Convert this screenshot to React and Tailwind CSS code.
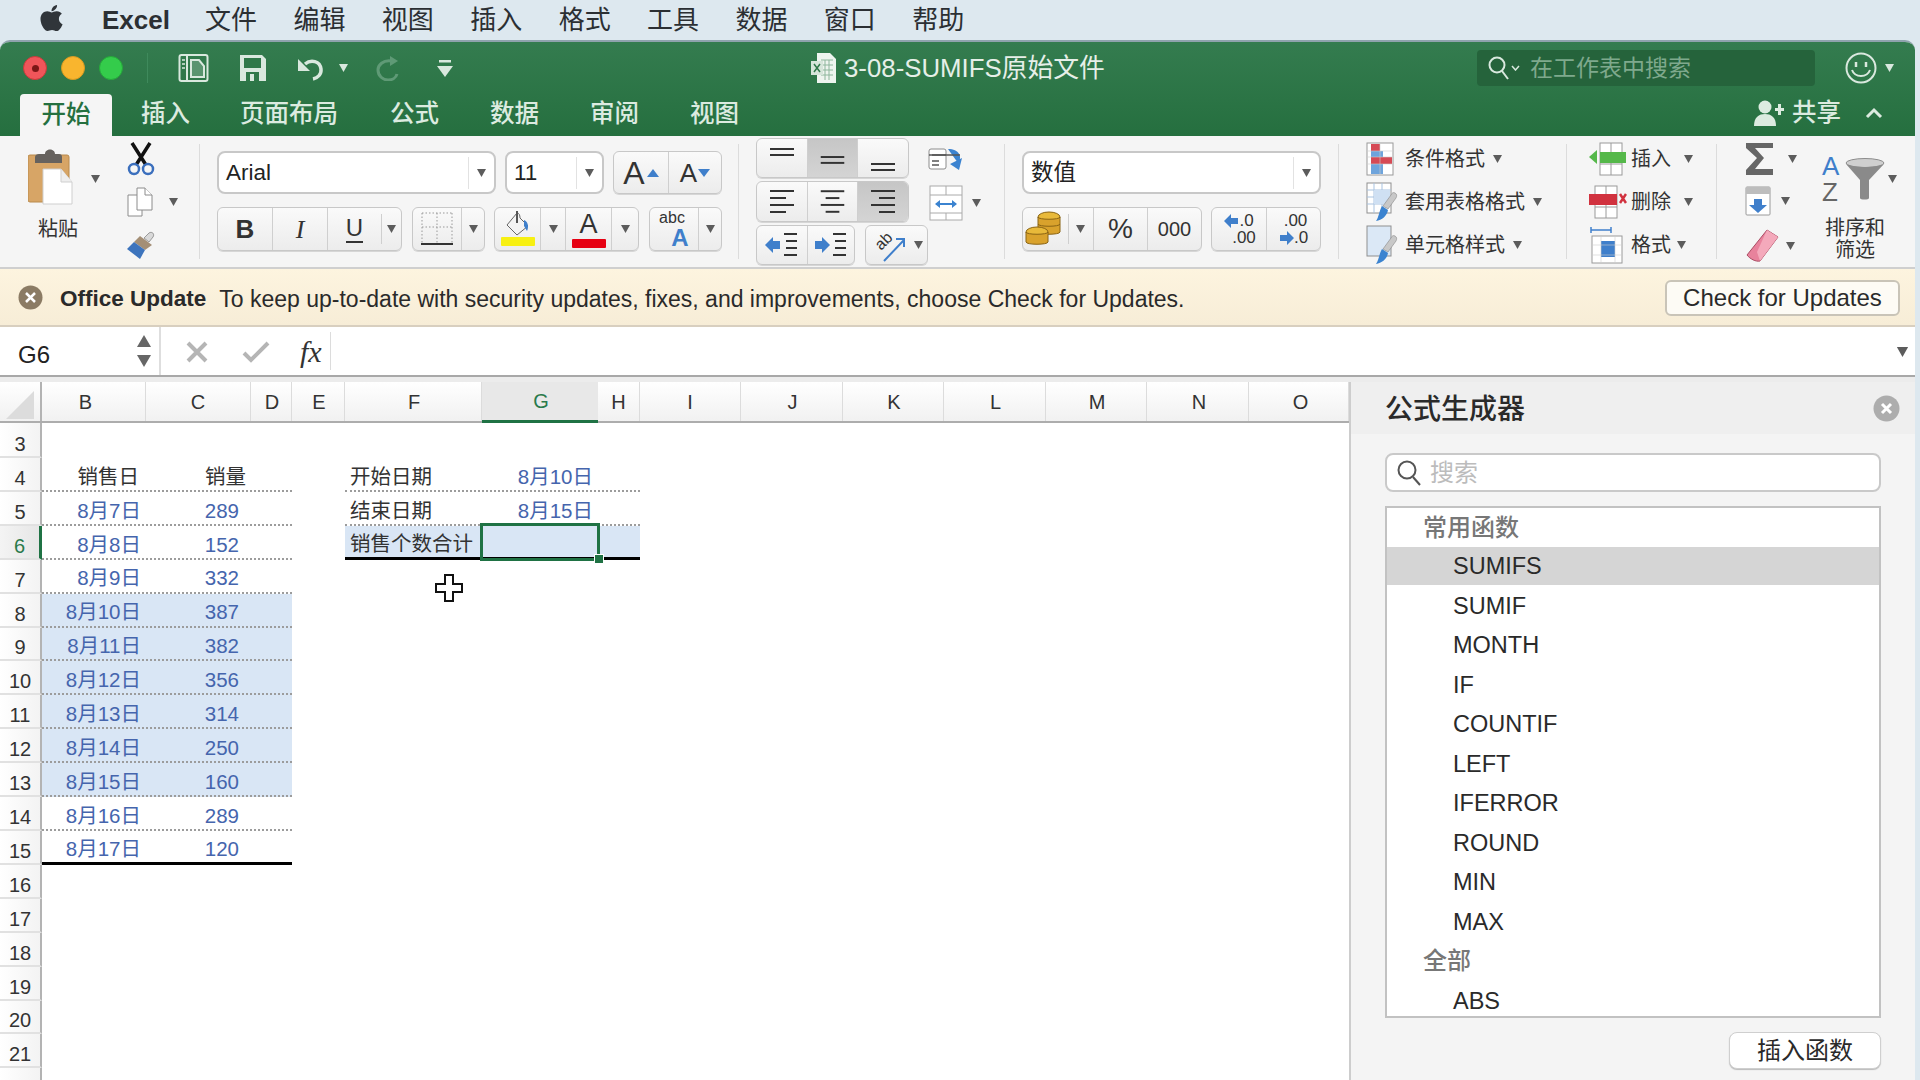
import React from 'react'
import { FaApple } from 'react-icons/fa'

const menus = ['文件', '编辑', '视图', '插入', '格式', '工具', '数据', '窗口', '帮助']
const tabs = [
  ['插入', 'ml-[29px]'],
  ['页面布局', 'ml-[50px]'],
  ['公式', 'ml-[52px]'],
  ['数据', 'ml-[51px]'],
  ['审阅', 'ml-[51px]'],
  ['视图', 'ml-[51px]'],
]
const columns = [
  ['B', 'w-[104px] pr-[16px]'],
  ['C', 'w-[105px]'],
  ['D', 'w-[41px] pl-[2px]'],
  ['E', 'w-[53px] pl-[2px]'],
  ['F', 'w-[137px] pl-[2px]'],
  ['G', 'w-[116px] pl-[2px]'],
  ['H', 'w-[42px]'],
  ['I', 'w-[101px]'],
  ['J', 'w-[102px] pl-[2px]'],
  ['K', 'w-[101px] pl-[2px]'],
  ['L', 'w-[102px] pl-[2px]'],
  ['M', 'w-[101px] pl-[2px]'],
  ['N', 'w-[102px] pl-[3px]'],
  ['O', 'w-[100px] pl-[4px]'],
]
const sales = [
  [5, '8月7日', '289'],
  [6, '8月8日', '152'],
  [7, '8月9日', '332'],
  [8, '8月10日', '387'],
  [9, '8月11日', '382'],
  [10, '8月12日', '356'],
  [11, '8月13日', '314'],
  [12, '8月14日', '250'],
  [13, '8月15日', '160'],
  [14, '8月16日', '289'],
  [15, '8月17日', '120'],
]
const funcs = ['SUMIF', 'MONTH', 'IF', 'COUNTIF', 'LEFT', 'IFERROR', 'ROUND', 'MIN', 'MAX']

const DOTTED = 'border-b-2 border-dotted border-[#9c9c9c]'
const THICK = 'border-b-[3px] border-solid border-black'

function Tri({ className = '', color = '#5c5c5c' }) {
  return (
    <svg width="9" height="8" viewBox="0 0 9 8" className={className}>
      <path d="M0 0h9L4.5 8z" fill={color} />
    </svg>
  )
}

function Seg({ className = '', children }) {
  return (
    <div className={`flex overflow-hidden rounded-md border border-[#c8c8c8] bg-gradient-to-b from-[#fafafa] to-[#ececec] shadow-[0_1px_0_#d6d6d6] ${className}`}>
      {children}
    </div>
  )
}

function Cell({ className = '', active, last, children }) {
  return (
    <div className={`flex items-center justify-center ${last ? '' : 'border-r border-[#cfcfcf]'} ${active ? 'bg-gradient-to-b from-[#c6c6c6] to-[#d4d4d4]' : ''} ${className}`}>
      {children}
    </div>
  )
}

function Select({ className = '', text }) {
  return (
    <div className={`flex h-[43px] items-center rounded-lg border-2 border-[#c8c8c8] bg-white pl-[7px] text-[22.500px] text-[#222] ${className}`}>
      <span className="flex-1">{text}</span>
      <span className="flex h-[32px] w-[26px] items-center justify-center border-l border-[#e2e2e2]">
        <Tri />
      </span>
    </div>
  )
}

function Sep() {
  return <div className="h-[115px] w-px shrink-0 self-center bg-[#dcdcdc]" />
}

function Lines({ rows }) {
  // rows: [y, x1, x2]
  return (
    <svg width="50" height="38" viewBox="0 0 50 38">
      {rows.map(([y, a, b]) => (
        <rect key={y} x={a} y={y} width={b - a} height="2" fill="#333" />
      ))}
    </svg>
  )
}

function CondIcon() {
  return (
    <svg width="30" height="40" viewBox="0 0 30 40">
      <rect x="1" y="4" width="26" height="32" fill="#fff" stroke="#9a9a9a" />
      <rect x="5" y="5" width="9" height="7" fill="#d64a55" />
      <rect x="5" y="12" width="12" height="6" fill="#6ea4dc" />
      <rect x="5" y="18" width="21" height="7" fill="#d64a55" />
      <rect x="5" y="25" width="12" height="10" fill="#6ea4dc" />
      <path d="M1 12h26M1 18h26M1 25h26M14 4v32" stroke="#cfcfcf" strokeWidth=".6" />
    </svg>
  )
}

function TableBrushIcon({ grid }) {
  return (
    <svg width="32" height="42" viewBox="0 0 32 42">
      <rect x="1" y="2" width="24" height="30" fill={grid ? '#fff' : '#dbe8f6'} stroke="#8f8f8f" />
      {grid && <path d="M1 9h24M1 16h24M1 23h24M8 2v30M16 2v30" stroke="#a9c3e0" />}
      {grid && <rect x="8" y="9" width="16" height="14" fill="#cfe0f3" />}
      <path d="M29 12c2 1 2 3 1 5l-8 11-5-3 8-11c1-2 2-3 4-2z" fill="#c8c8c8" stroke="#888" strokeWidth=".6" />
      <path d="M16 25l6 4c-1 6-6 10-12 11 3-4 3-10 6-15z" fill="#3b83d0" />
    </svg>
  )
}

function Painter() {
  return (
    <svg width="32" height="30" viewBox="0 0 32 30">
      <path d="M24 3c3-2 6 1 4 4l-4 5-5-4z" fill="#d9d9d9" stroke="#999" />
      <path d="M15 6l12 9-7 5L9 12z" fill="#a48f76" />
      <path d="M9 12l11 8-5 9L2 19z" fill="#3d74bd" />
    </svg>
  )
}

function SheetRow({ n, rowClass = 'h-[33.92px]', selected, cells = {} }) {
  return (
    <div className={`flex shrink-0 ${rowClass}`}>
      <div className={`flex w-[42px] shrink-0 items-center justify-center border-b-2 border-[#e1e1e1] pt-2 text-[20px] ${selected ? 'border-r-[3px] border-r-[#1f7244] bg-gradient-to-r from-[#f4f4f4] to-[#e6e6e6] text-[#2a7a4b]' : 'border-r-2 border-r-[#b3b3b3] bg-gradient-to-r from-white to-[#f3f3f3] text-[#333]'}`}>
        {n}
      </div>
      {cells.left}
      {cells.right}
    </div>
  )
}

function SalesCells({ date, qty, fill, last, head }) {
  const bg = fill ? 'bg-[#d9e6f5]' : ''
  const line = last ? THICK : DOTTED
  return (
    <div className={`flex w-[250px] shrink-0 ${line} ${bg}`}>
      <div className={`flex w-[104px] items-center justify-end pt-[6px] ${head ? 'pr-[7px] text-[#333]' : 'pr-[5px] text-[#4565ad]'}`}>{date}</div>
      <div className={`flex w-[105px] items-center justify-end pt-[6px] ${head ? 'pr-[5px] text-[#333]' : 'pr-[12px] text-[#4565ad]'}`}>{qty}</div>
    </div>
  )
}

export default function App() {
  const rightCells = {
    4: (
      <div className={`ml-[53px] flex w-[295px] shrink-0 ${DOTTED}`}>
        <div className="flex w-[137px] items-center pl-[5px] pt-[6px] text-[#333]">开始日期</div>
        <div className="flex w-[116px] items-center justify-end pr-[5px] pt-[6px] text-[#4565ad]">8月10日</div>
      </div>
    ),
    5: (
      <div className={`ml-[53px] flex w-[295px] shrink-0 ${DOTTED}`}>
        <div className="flex w-[137px] items-center pl-[5px] pt-[6px] text-[#333]">结束日期</div>
        <div className="flex w-[116px] items-center justify-end pr-[5px] pt-[6px] text-[#4565ad]">8月15日</div>
      </div>
    ),
    6: (
      <div className={`ml-[53px] flex w-[295px] shrink-0 bg-[#d9e6f5] ${THICK}`}>
        <div className="flex w-[137px] items-center whitespace-nowrap pl-[5px] pt-[6px] text-[#333]">销售个数合计</div>
        <div className="relative w-[116px]">
          <div className="absolute -bottom-[4px] -left-[2px] -right-[2px] -top-[3px] border-[3px] border-[#1f7244]" />
          <div className="absolute -bottom-[7px] -right-[6px] h-[10px] w-[10px] border border-white bg-[#1f7244]" />
        </div>
      </div>
    ),
  }

  return (
    <div className="relative h-[1080px] w-[1920px] overflow-hidden bg-[#dde8ef] text-[#222] [font-family:'Liberation_Sans','Noto_Sans_CJK_SC',sans-serif]">
      {/* mac menu bar */}
      <div className="flex h-[40px] items-center pl-[39px] text-[26px] leading-none text-[#2b2f33]">
        <FaApple className="h-[30px] w-[25px] -translate-y-[2px] text-[#30353a]" />
        <span className="ml-[38px] w-[67px] text-[26px] font-bold">Excel</span>
        <div className="ml-[36px] flex gap-[36.400px]">
          {menus.map((m) => (
            <span key={m}>{m}</span>
          ))}
        </div>
      </div>

      {/* window */}
      <div className="flex h-[1040px] w-[1915px] flex-col overflow-hidden rounded-t-[10px] border-t-2 border-[#8fa3ad] bg-white">
        <div className="bg-gradient-to-b from-[#347c4f] to-[#256f3f]">
          <div className="flex h-[52px] items-center pl-[23px]">
            <div className="flex gap-[14px]">
              <span className="flex h-[24px] w-[24px] items-center justify-center rounded-full border border-[#c93a3a] bg-[#f0555a]">
                <span className="h-[7px] w-[7px] rounded-full bg-[#7c1717]" />
              </span>
              <span className="h-[24px] w-[24px] rounded-full border border-[#d99a20] bg-[#f9b52e]" />
              <span className="h-[24px] w-[24px] rounded-full border border-[#25a83a] bg-[#34cc4b]" />
            </div>
            <div className="ml-[24px] h-[30px] w-px bg-[#3f8a5c]" />
            <svg className="ml-[30px]" width="31" height="30" viewBox="0 0 31 30" fill="none" stroke="#d9e8de" strokeWidth="2">
              <rect x="1.5" y="2" width="28" height="26" rx="2" />
              <path d="M9 2v26" />
              <path d="M4 7h3M4 11h3M4 15h3" strokeWidth="1.5" />
              <path d="M13 7h8l5 6v11H13z" fill="#d9e8de" fillOpacity=".25" />
            </svg>
            <svg className="ml-[29px]" width="29" height="28" viewBox="0 0 29 28">
              <path d="M2 1h22l4 4v22H2z" fill="#d9e8de" />
              <rect x="6" y="4" width="17" height="10" fill="#2f7849" />
              <rect x="8" y="18" width="13" height="9" fill="#2f7849" />
              <rect x="12" y="20" width="4" height="7" fill="#d9e8de" />
            </svg>
            <svg className="ml-[29px]" width="30" height="26" viewBox="0 0 30 26" fill="none">
              <path d="M2 4v12h12z" fill="#d9e8de" />
              <path d="M9 9c6-5 15-3 16 5 .6 5-3 9-8 10" stroke="#d9e8de" strokeWidth="3.5" />
            </svg>
            <Tri className="ml-[13px]" color="#d9e8de" />
            <svg className="ml-[28px]" width="24" height="26" viewBox="0 0 24 26" fill="none">
              <path d="M14 1v10l8-5z" fill="#5f9a76" />
              <path d="M15 6C7 5 2 10 2 15c0 6 5 10 10 10 4 0 8-2 9-6" stroke="#5f9a76" strokeWidth="3" />
            </svg>
            <svg className="ml-[37px]" width="16" height="22" viewBox="0 0 16 22">
              <path d="M2 3h12v2.500H2z" fill="#d9e8de" />
              <path d="M0 9h16l-8 11z" fill="#d9e8de" />
            </svg>
            <svg className="ml-[358px]" width="26" height="32" viewBox="0 0 26 32">
              <path d="M6 1h13l6 6v24H6z" fill="#eef4ef" />
              <path d="M10 8h12M10 13h12M10 18h12M10 23h12M14 8v20M18 8v20" stroke="#8eb69c" strokeWidth="1" />
              <rect x="0" y="9" width="12" height="14" fill="#d6e5da" />
              <path d="M3 12l6 8M9 12l-6 8" stroke="#2f7849" strokeWidth="1.500" />
            </svg>
            <span className="ml-[7px] w-[272px] whitespace-nowrap text-[25.800px] text-[#e6efe8]">3-08-SUMIFS原始文件</span>
            <div className="ml-[361px] flex h-[36px] w-[338px] items-center rounded bg-[#25633b] pl-[11px]">
              <svg width="22" height="24" viewBox="0 0 22 24" fill="none" stroke="#d9e8de" strokeWidth="2">
                <circle cx="9" cy="9" r="7.500" />
                <path d="M14 15l6 8" />
              </svg>
              <svg className="ml-[1px]" width="9" height="6" viewBox="0 0 9 6" fill="none" stroke="#d9e8de" strokeWidth="1.500">
                <path d="M1 1l3.500 4L8 1" />
              </svg>
              <span className="ml-[10px] text-[23px] text-[#7fa98d]">在工作表中搜索</span>
            </div>
            <svg className="ml-[30px]" width="32" height="32" viewBox="0 0 32 32" fill="none" stroke="#d9e8de" strokeWidth="2">
              <circle cx="16" cy="16" r="14.500" />
              <path d="M11 10v5M21 10v5" strokeWidth="2.500" />
              <path d="M7 18c3 8 15 8 18 0" />
            </svg>
            <Tri className="ml-[8px]" color="#d9e8de" />
          </div>
          <div className="flex h-[42px] pl-[20px] pr-[32px] text-[24.5px] font-medium text-[#dcebe0]">
            <div className="flex w-[92px] items-center justify-center rounded-t bg-[#f5f5f5] text-[#257040]">开始</div>
            {tabs.map(([t, ml]) => (
              <span key={t} className={`flex items-center pb-[1px] ${ml}`}>{t}</span>
            ))}
            <div className="ml-auto flex items-center pb-[4px]">
              <svg width="32" height="28" viewBox="0 0 32 28" fill="#dcebe0">
                <circle cx="12" cy="8" r="6.500" />
                <path d="M1 27c0-9 5-12 11-12s11 3 11 12z" />
                <path d="M22 9h9v3h-9zM25 5h3v11h-3z" />
              </svg>
              <span className="ml-[7px]">共享</span>
              <svg className="ml-[24px]" width="18" height="12" viewBox="0 0 18 12" fill="none" stroke="#dcebe0" strokeWidth="3">
                <path d="M2 10l7-7 7 7" />
              </svg>
            </div>
          </div>
        </div>

        {/* ribbon */}
        <div className="flex h-[133px] shrink-0 border-b-2 border-[#cfcfcf] bg-[#f5f5f5]">
          <div className="flex w-[114px] shrink-0 flex-col pl-[28px] pt-[13px]">
            <div className="flex items-center">
              <svg width="45" height="56" viewBox="0 0 45 56">
                <rect x="0" y="6" width="41" height="47" rx="2" fill="#d7a566" stroke="#b98a4c" />
                <path d="M7 14V8c0-2 2-3 4-3h6c0-6 10-6 10 0h4c2 0 3 1 3 3v6z" fill="#66625e" />
                <path d="M15 20h18l11 13v22H15z" fill="#fff" stroke="#cfcfcf" />
                <path d="M33 20v13h11" fill="#eee" stroke="#cfcfcf" />
              </svg>
              <Tri className="ml-[18px] mt-[4px]" />
            </div>
            <span className="ml-[10px] mt-[9px] text-[20px] text-[#333]">粘贴</span>
          </div>
          <div className="flex w-[85px] shrink-0 flex-col pl-[11px] pt-[6px]">
            <svg width="32" height="34" viewBox="0 0 32 34" fill="none">
              <path d="M7 1l14 22M25 1L11 23" stroke="#111" strokeWidth="3.500" />
              <circle cx="9" cy="27" r="5" stroke="#3b6fbd" strokeWidth="2.500" />
              <circle cx="23" cy="27" r="5" stroke="#3b6fbd" strokeWidth="2.500" />
            </svg>
            <div className="ml-[2px] mt-[11px] flex items-center">
              <svg width="26" height="30" viewBox="0 0 26 30" fill="#fff" stroke="#8c8c8c">
                <path d="M1 8h14v21H1z" />
                <path d="M10 1h8l7 7v15H10z" />
                <path d="M18 1v7h7" />
              </svg>
              <Tri className="ml-[16px]" />
            </div>
            <div className="mt-[13px]">
              <Painter />
            </div>
          </div>
          <Sep />

          <div className="ml-[17px] flex w-[505px] shrink-0 flex-col pt-[15px]">
            <div className="flex">
              <Select className="w-[279px]" text="Arial" />
              <Select className="ml-[9px] w-[99px]" text="11" />
              <Seg className="ml-[9px] h-[43px] w-[109px]">
                <Cell className="w-[55px] gap-[2px]">
                  <span className="text-[32px] leading-none text-[#333]">A</span>
                  <svg width="12" height="8" viewBox="0 0 12 8"><path d="M0 8h12L6 0z" fill="#3f7fcb" /></svg>
                </Cell>
                <Cell last className="flex-1 gap-[1px]">
                  <span className="text-[26px] leading-none text-[#333]">A</span>
                  <svg width="12" height="8" viewBox="0 0 12 8"><path d="M0 0h12L6 8z" fill="#3f7fcb" /></svg>
                </Cell>
              </Seg>
            </div>
            <div className="mt-[13px] flex h-[44px]">
              <Seg className="w-[185px]">
                <Cell className="w-[55px] text-[26px] font-bold text-[#333]">B</Cell>
                <Cell className="w-[55px] text-[26px] italic text-[#333] [font-family:'Liberation_Serif',serif]">I</Cell>
                <Cell className="w-[53px] border-r-0">
                  <span className="border-b-2 border-[#333] text-[24px] leading-[26px] text-[#333]">U</span>
                </Cell>
                <Cell last className="flex-1">
                  <span className="flex h-[30px] w-full items-center justify-center border-l border-[#cfcfcf]"><Tri /></span>
                </Cell>
              </Seg>
              <Seg className="ml-[10px] w-[73px]">
                <Cell last className="w-[48px]">
                  <svg width="34" height="36" viewBox="0 0 34 36" fill="none">
                    <path d="M2 2h30M2 16h30M2 2v30M17 2v30M32 2v30" stroke="#999" strokeDasharray="1.500 2" />
                    <path d="M1 33h32" stroke="#333" strokeWidth="2" />
                  </svg>
                </Cell>
                <Cell last className="flex-1 border-l border-[#cfcfcf]"><Tri /></Cell>
              </Seg>
              <Seg className="ml-[9px] w-[145px]">
                <Cell last className="w-[45px]">
                  <svg width="34" height="38" viewBox="0 0 34 38">
                    <path d="M16 3c2 0 3 2 3 5l8 8-11 9-10-10z" fill="#f4f4f4" stroke="#666" />
                    <path d="M16 1v12" stroke="#555" strokeWidth="2" />
                    <path d="M23 10c4 2 5 6 3 11l-3-5z" fill="#3f7fcb" />
                    <rect x="0" y="27" width="34" height="9" rx="1" fill="#f7f012" />
                  </svg>
                </Cell>
                <Cell className="w-[26px] border-l border-[#cfcfcf]"><Tri /></Cell>
                <Cell last className="w-[45px] flex-col leading-none">
                  <span className="text-[27px] text-[#333]">A</span>
                  <span className="mt-[1px] h-[9px] w-[34px] rounded-[1px] bg-[#e60012]" />
                </Cell>
                <Cell last className="flex-1 border-l border-[#cfcfcf]"><Tri /></Cell>
              </Seg>
              <Seg className="ml-[10px] w-[73px]">
                <Cell last className="w-[48px] flex-col leading-none">
                  <span className="-ml-[4px] text-[16px] leading-[16px] text-[#333]">abc</span>
                  <span className="ml-[12px] text-[24px] leading-[23px] font-bold text-[#3f7fcb]">A</span>
                </Cell>
                <Cell last className="flex-1 border-l border-[#cfcfcf]"><Tri /></Cell>
              </Seg>
            </div>
          </div>
          <div className="ml-[16px]" />
          <Sep />

          <div className="ml-[17px] flex w-[248px] shrink-0">
            <div className="flex w-[172px] flex-col pt-[2px]">
              <Seg className="h-[40px] w-[153px]">
                <Cell className="w-[52px]"><Lines rows={[[9, 13, 37], [15, 13, 37]]} /></Cell>
                <Cell active className="w-[50px]"><Lines rows={[[17, 13, 37], [23, 13, 37]]} /></Cell>
                <Cell last className="flex-1"><Lines rows={[[24, 13, 37], [30, 13, 37]]} /></Cell>
              </Seg>
              <Seg className="mt-[3px] h-[41px] w-[153px]">
                <Cell className="w-[52px]"><Lines rows={[[7, 13, 37], [14, 13, 29], [21, 13, 37], [28, 13, 29]]} /></Cell>
                <Cell className="w-[50px]"><Lines rows={[[7, 13, 37], [14, 18, 32], [21, 13, 37], [28, 18, 32]]} /></Cell>
                <Cell last active className="flex-1"><Lines rows={[[7, 13, 37], [14, 21, 37], [21, 13, 37], [28, 21, 37]]} /></Cell>
              </Seg>
              <div className="mt-[3px] flex h-[40px]">
                <Seg className="w-[101px]">
                  <Cell className="w-[51px]">
                    <svg width="34" height="26" viewBox="0 0 34 26">
                      <path d="M0 13l8-8v4h7v8H8v4z" fill="#3f7fcb" />
                      <path d="M19 2h13M21 9h11M21 16h11M19 23h13" stroke="#333" strokeWidth="2" />
                    </svg>
                  </Cell>
                  <Cell last className="flex-1">
                    <svg width="34" height="26" viewBox="0 0 34 26">
                      <path d="M16 13L8 5v4H1v8h7v4z" fill="#3f7fcb" />
                      <path d="M19 2h13M21 9h11M21 16h11M19 23h13" stroke="#333" strokeWidth="2" />
                    </svg>
                  </Cell>
                </Seg>
                <Seg className="ml-[10px] w-[64px]">
                  <Cell last className="w-[44px]">
                    <svg width="38" height="36" viewBox="0 0 38 36" fill="none">
                      <text x="12" y="24" fontSize="16" fill="#333" transform="rotate(-45 12 24)">ab</text>
                      <path d="M15 34l20-21M27 12h8v8" stroke="#3f7fcb" strokeWidth="2" />
                    </svg>
                  </Cell>
                  <Cell last className="flex-1"><Tri /></Cell>
                </Seg>
              </div>
            </div>
            <div className="flex flex-1 flex-col pt-[10px]">
              <svg width="36" height="30" viewBox="0 0 36 30">
                <rect x="1" y="3" width="17" height="20" rx="2" fill="#fff" stroke="#8c8c8c" />
                <path d="M1 9h17M4 15h7M4 19h7" stroke="#555" strokeWidth="1.500" />
                <path d="M20 3c11 0 15 8 10 14M34 12l-3 12-9-6z" fill="#3b83d0" />
                <path d="M4 9h28" stroke="#555" strokeWidth="1.500" />
              </svg>
              <div className="mt-[9px] flex items-center">
                <svg width="36" height="36" viewBox="0 0 36 36">
                  <rect x="2" y="1" width="32" height="34" fill="#fff" stroke="#aaa" />
                  <path d="M2 10h32M2 28h32M18 1v9M18 28v7" stroke="#aaa" />
                  <path d="M7 19l5-4v3h12v-3l5 4-5 4v-3H12v3z" fill="#3b83d0" />
                </svg>
                <Tri className="ml-[8px]" />
              </div>
            </div>
          </div>
          <Sep />

          <div className="ml-[17px] flex w-[299px] shrink-0 flex-col pt-[15px]">
            <Select text="数值" />
            <div className="mt-[13px] flex h-[44px]">
              <Seg className="w-[180px]">
                <Cell className="w-[71px] justify-start gap-[3px] pl-[2px]">
                  <svg width="36" height="38" viewBox="0 0 36 38">
                    <ellipse cx="24" cy="7" rx="11" ry="5" fill="#e8b93a" stroke="#8a6414" />
                    <path d="M13 7v15c0 3 22 3 22 0V7c0 3-22 3-22 0z" fill="#d9a22c" stroke="#8a6414" />
                    <path d="M13 14c0 3 22 3 22 0" fill="none" stroke="#8a6414" />
                    <ellipse cx="12" cy="22" rx="11" ry="5" fill="#e8b93a" stroke="#8a6414" />
                    <path d="M1 22v10c0 3 22 3 22 0V22c0 3-22 3-22 0z" fill="#d9a22c" stroke="#8a6414" />
                  </svg>
                  <span className="ml-[4px] flex h-[30px] items-center border-l border-[#cfcfcf] pl-[7px]"><Tri /></span>
                </Cell>
                <Cell className="w-[54px] text-[28px] text-[#333]">%</Cell>
                <Cell last className="flex-1 text-[20px] text-[#333]">000</Cell>
              </Seg>
              <Seg className="ml-[9px] w-[110px]">
                <Cell className="w-[55px] flex-col text-[17px] leading-[17px] text-[#333]">
                  <span className="flex items-center">
                    <svg width="15" height="14" viewBox="0 0 15 14"><path d="M0 7l7-7v4h7v6H7v4z" fill="#3f7fcb" /></svg>
                    .0
                  </span>
                  <span className="ml-[10px]">.00</span>
                </Cell>
                <Cell last className="flex-1 flex-col text-[17px] leading-[17px] text-[#333]">
                  <span className="ml-[4px]">.00</span>
                  <span className="flex items-center">
                    <svg width="15" height="14" viewBox="0 0 15 14"><path d="M15 7L8 0v4H1v6h7v4z" fill="#3f7fcb" /></svg>
                    .0
                  </span>
                </Cell>
              </Seg>
            </div>
          </div>
          <div className="ml-[17px]" />
          <Sep />

          <div className="flex w-[227px] shrink-0 flex-col pl-[27px] pt-[1px] text-[20px] text-[#333]">
            <div className="flex h-[43.500px] items-center">
              <CondIcon />
              <span className="ml-[9px]">条件格式</span>
              <Tri className="ml-[8px]" />
            </div>
            <div className="flex h-[43.500px] items-center">
              <TableBrushIcon grid />
              <span className="ml-[7px]">套用表格格式</span>
              <Tri className="ml-[8px]" />
            </div>
            <div className="flex h-[43.500px] items-center">
              <TableBrushIcon />
              <span className="ml-[7px]">单元格样式</span>
              <Tri className="ml-[8px]" />
            </div>
          </div>
          <Sep />

          <div className="flex w-[149px] shrink-0 flex-col pl-[22px] pt-[1px] text-[20px] text-[#333]">
            <div className="flex h-[43.500px] items-center">
              <svg width="38" height="34" viewBox="0 0 38 34">
                <rect x="11" y="1" width="22" height="32" fill="#fff" stroke="#9a9a9a" />
                <path d="M11 22h22M22 1v32" stroke="#9a9a9a" />
                <rect x="11" y="10" width="26" height="11" fill="#55b84a" />
                <path d="M0 15l8-7v14z" fill="#55b84a" />
              </svg>
              <span className="ml-[4px]">插入</span>
              <Tri className="ml-[13px]" />
            </div>
            <div className="flex h-[43.500px] items-center">
              <svg width="38" height="34" viewBox="0 0 38 34">
                <rect x="6" y="1" width="22" height="32" fill="#fff" stroke="#9a9a9a" />
                <path d="M6 22h22M17 1v32" stroke="#9a9a9a" />
                <rect x="0" y="9" width="28" height="11" fill="#d1323f" />
                <path d="M31 9l6 9M37 9l-6 9" stroke="#d1323f" strokeWidth="2.500" />
              </svg>
              <span className="ml-[4px]">删除</span>
              <Tri className="ml-[13px]" />
            </div>
            <div className="flex h-[43.500px] items-center">
              <svg width="38" height="38" viewBox="0 0 38 38">
                <path d="M2 4h20M2 1v6M22 1v6" stroke="#3f7fcb" strokeWidth="1.500" />
                <rect x="3" y="10" width="30" height="27" fill="#fff" stroke="#9a9a9a" />
                <rect x="12" y="15" width="14" height="16" fill="#3f7fcb" />
                <path d="M3 19h30M3 29h30M12 10v27M26 10v27" stroke="#cfcfcf" strokeWidth=".6" />
              </svg>
              <span className="ml-[4px]">格式</span>
              <Tri className="ml-[6px]" />
            </div>
          </div>
          <Sep />

          <div className="flex flex-1">
            <div className="flex w-[105px] flex-col pl-[28px] pt-[7px]">
              <div className="flex items-center">
                <svg width="30" height="32" viewBox="0 0 30 32">
                  <path d="M1 0h27v5H10l9 10-9 11h18v6H1v-5l11-12L1 5z" fill="#666" />
                </svg>
                <Tri className="ml-[13px]" />
              </div>
              <div className="mt-[11px] flex items-center">
                <svg width="26" height="30" viewBox="0 0 26 30">
                  <rect x="1" y="1" width="24" height="28" rx="1" fill="#fff" stroke="#9a9a9a" />
                  <rect x="1" y="1" width="24" height="7" fill="#bdbdbd" />
                  <path d="M9 13h8v6h5l-9 8-9-8h5z" fill="#3f7fcb" />
                </svg>
                <Tri className="ml-[10px]" />
              </div>
              <div className="mt-[13px] flex items-center">
                <svg width="34" height="34" viewBox="0 0 34 34">
                  <path d="M22 1l11 7-18 24c-4 1-10-2-13-6z" fill="#e8829c" stroke="#a94c63" />
                  <path d="M22 1l11 7-18 24-3-9z" fill="#f4a9bb" />
                </svg>
                <Tri className="ml-[7px]" />
              </div>
            </div>
            <div className="flex flex-1 flex-col items-start pt-[17px]">
              <div className="flex items-center">
                <div className="flex w-[22px] flex-col text-[26px] leading-[26px]">
                  <span className="text-[#3f7fcb]">A</span>
                  <span className="text-[#666]">Z</span>
                </div>
                <svg className="ml-[1px]" width="40" height="42" viewBox="0 0 40 42">
                  <ellipse cx="20" cy="5" rx="19" ry="4.500" fill="#cfcfcf" stroke="#8c8c8c" />
                  <path d="M1 6l14 16v18c0 2 9 2 9 0V22L39 6c-8 4-30 4-38 0z" fill="#8a8a8a" />
                </svg>
                <Tri className="ml-[3px]" />
              </div>
              <div className="ml-[2px] mt-[12px] flex w-[62px] flex-col items-center text-[20px] leading-[22px] text-[#333]">
                <span>排序和</span>
                <span>筛选</span>
              </div>
            </div>
          </div>
        </div>

        {/* update banner */}
        <div className="flex h-[58px] shrink-0 items-center border-b-2 border-[#d8cfbf] bg-gradient-to-b from-[#fdf4df] to-[#f7edd7] pl-[18px] pr-[15px]">
          <svg width="25" height="25" viewBox="0 0 25 25">
            <circle cx="12.500" cy="12.500" r="12" fill="#8b7b64" />
            <path d="M8 8l9 9M17 8l-9 9" stroke="#fff" strokeWidth="2.500" />
          </svg>
          <span className="ml-[17px] pt-[4px] text-[22.500px] font-bold leading-none text-[#2a2a2a]">Office Update</span>
          <span className="ml-[13px] pt-[4px] text-[23px] leading-none text-[#2a2a2a]">
            To keep up-to-date with security updates, fixes, and improvements, choose Check for Updates.
          </span>
          <button className="ml-auto mt-[1px] flex h-[36px] w-[235px] items-center justify-center rounded-md border-2 border-[#c9c4b8] bg-[#fdfbf5] text-[24px] text-[#2a2a2a]">
            Check for Updates
          </button>
        </div>

        {/* formula bar */}
        <div className="flex h-[50px] shrink-0 items-center border-b-2 border-[#a8a8a8] bg-white">
          <div className="flex h-full w-[161px] items-center border-r-2 border-[#dedede] pl-[18px] pr-[8px] text-[24px] text-[#222]">
            <span className="flex-1 pt-[8px]">G6</span>
            <div className="flex flex-col gap-[8px]">
              <svg width="14" height="12" viewBox="0 0 14 12"><path d="M0 12h14L7 0z" fill="#666" /></svg>
              <svg width="14" height="12" viewBox="0 0 14 12"><path d="M0 0h14L7 12z" fill="#666" /></svg>
            </div>
          </div>
          <svg className="ml-[25px] mt-[2px]" width="22" height="22" viewBox="0 0 22 22" stroke="#b5b5b5" strokeWidth="4">
            <path d="M2 2l18 18M20 2L2 20" />
          </svg>
          <svg className="ml-[34px] mt-[2px]" width="28" height="22" viewBox="0 0 28 22" fill="none" stroke="#b5b5b5" strokeWidth="4">
            <path d="M2 12l7 7L26 2" />
          </svg>
          <span className="ml-[30px] mt-[2px] w-[28px] text-[30px] italic leading-none text-[#333] [font-family:'Liberation_Serif',serif]">fx</span>
          <div className="ml-[2px] h-[38px] w-px bg-[#dcdcdc]" />
          <Tri className="ml-auto mr-[8px] mt-[2px] scale-125" />
        </div>
        <div className="h-[5px] shrink-0 bg-[#ececec]" />

        <div className="flex min-h-0 flex-1">
          {/* sheet */}
          <div className="flex w-[1349px] shrink-0 flex-col overflow-hidden text-[20.500px] leading-none">
            <div className="flex h-[41px] shrink-0 border-b-2 border-[#adadad] bg-gradient-to-b from-white to-[#f1f1f1] text-[20px]">
              <div className="flex w-[42px] shrink-0 items-end justify-center border-r-2 border-[#b3b3b3] pb-[2px]">
                <svg width="28" height="30" viewBox="0 0 28 30"><path d="M0 30L28 2v28z" fill="#dcdcdc" /></svg>
              </div>
              {columns.map(([c, w]) => (
                <div
                  key={c}
                  className={`flex shrink-0 items-center justify-center ${w} ${c === 'G' ? 'border-b-[3px] border-[#1f7244] bg-[#e8e8e8] text-[#2a7a4b] -mb-[2px]' : 'border-r border-[#dcdcdc] text-[#333]'}`}
                >
                  {c}
                </div>
              ))}
            </div>

            <SheetRow n={3} rowClass="h-[35px]" />
            <SheetRow n={4} cells={{ left: <SalesCells head date="销售日" qty="销量" />, right: rightCells[4] }} />
            {sales.map(([n, date, qty]) => (
              <SheetRow
                key={n}
                n={n}
                selected={n === 6}
                cells={{
                  left: <SalesCells date={date} qty={qty} fill={n >= 8 && n <= 13} last={n === 15} />,
                  right: rightCells[n],
                }}
              />
            ))}
            {[16, 17, 18, 19, 20, 21, ''].map((n) => (
              <SheetRow key={n} n={n} />
            ))}
          </div>

          {/* formula builder */}
          <div className="relative flex w-[566px] flex-col border-l-2 border-[#cdcdcd] bg-[#f4f4f4]">
            <div className="flex h-[52px] shrink-0 items-center justify-between bg-[#efefef] pl-[34px] pr-[15px]">
              <span className="pt-[3px] text-[28px] font-medium leading-none text-[#2a2a2a]">公式生成器</span>
              <svg width="27" height="27" viewBox="0 0 27 27">
                <circle cx="13.500" cy="13.500" r="13" fill="#adadad" />
                <path d="M9 9l9 9M18 9l-9 9" stroke="#fff" strokeWidth="3" />
              </svg>
            </div>
            <div className="ml-[34px] mt-[19px] flex h-[39px] w-[496px] items-center rounded-lg border-2 border-[#c9c9c9] bg-white pl-[10px]">
              <svg width="24" height="26" viewBox="0 0 24 26" fill="none" stroke="#555" strokeWidth="2">
                <circle cx="10" cy="10" r="8.500" />
                <path d="M16 17l7 8" />
              </svg>
              <span className="ml-[9px] text-[24px] leading-none text-[#bcbcbc]">搜索</span>
            </div>
            <div className="ml-[34px] mt-[14px] h-[512px] w-[496px] overflow-hidden border-2 border-[#c2c2c2] bg-white text-[23.500px] leading-none text-[#2a2a2a]">
              <div className="flex h-[39px] items-center pl-[36px] text-[24px] font-medium text-[#777]">常用函数</div>
              <div className="flex h-[38px] items-center bg-[#d5d5d5] pl-[66px] pt-[1px]">SUMIFS</div>
              <div className="h-px" />
              {funcs.map((f) => (
                <div key={f} className="flex h-[39.500px] items-center pl-[66px] pt-[1px]">{f}</div>
              ))}
              <div className="flex h-[39.500px] items-center pl-[36px] text-[24px] font-medium text-[#777]">全部</div>
              <div className="flex h-[39.500px] items-center pl-[66px] pt-[1px]">ABS</div>
            </div>
            <div className="ml-[378px] mt-[14px] flex h-[37px] w-[152px] items-center justify-center rounded-lg border border-[#cfcfcf] bg-white text-[24px] leading-none text-[#2a2a2a] shadow-[0_1px_1px_#bbb]">
              插入函数
            </div>
          </div>
        </div>
      </div>

      {/* mouse cursor over the sheet */}
      <svg className="absolute left-[435px] top-[574px]" width="28" height="28" viewBox="0 0 28 28">
        <path d="M10 1h8v9h9v8h-9v9h-8v-9H1v-8h9z" fill="#fff" stroke="#111" strokeWidth="2" />
      </svg>
    </div>
  )
}
